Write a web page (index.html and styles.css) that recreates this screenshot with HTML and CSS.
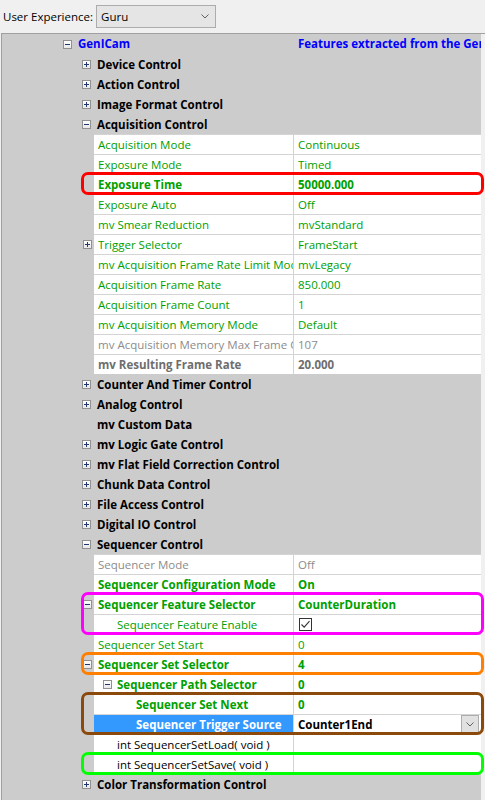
FILE: index.html
```html
<!DOCTYPE html>
<html lang="en">
<head>
    <meta charset="UTF-8">
    <title>Property Grid</title>
    <link rel="stylesheet" href="styles.css">
</head>
<body>
<div class="toolbar">
    <label>User Experience:</label>
    <div class="combo">
        <span>Guru</span>
        <svg class="chev" width="8" height="5" viewBox="0 0 8 5"><path d="M0.5 0.5 L4 4 L7.5 0.5" fill="none" stroke="#606060"/></svg>
    </div>
</div>

<div class="tree">
    <div class="rows">
        <div class="root">
            <div class="root-name"><span class="exp"></span><span>GenICam</span></div>
            <div class="root-val">Features extracted from the GenICam XML file</div>
        </div>

        <div class="node"><span class="exp plus"></span>Device Control</div>
        <div class="node"><span class="exp plus"></span>Action Control</div>
        <div class="node"><span class="exp plus"></span>Image Format Control</div>
        <div class="node"><span class="exp"></span>Acquisition Control</div>

        <div class="row g"><div class="gut"></div><div class="name">Acquisition Mode</div><div class="val">Continuous</div></div>
        <div class="row g"><div class="gut"></div><div class="name">Exposure Mode</div><div class="val">Timed</div></div>
        <div class="mark red">
            <div class="row gb"><div class="gut"></div><div class="name">Exposure Time</div><div class="val">50000.000</div></div>
        </div>
        <div class="row g"><div class="gut"></div><div class="name">Exposure Auto</div><div class="val">Off</div></div>
        <div class="row g"><div class="gut"></div><div class="name">mv Smear Reduction</div><div class="val">mvStandard</div></div>
        <div class="row g"><div class="gut"><span class="exp plus"></span></div><div class="name">Trigger Selector</div><div class="val">FrameStart</div></div>
        <div class="row g"><div class="gut"></div><div class="name">mv Acquisition Frame Rate Limit Mode</div><div class="val">mvLegacy</div></div>
        <div class="row g"><div class="gut"></div><div class="name">Acquisition Frame Rate</div><div class="val">850.000</div></div>
        <div class="row g"><div class="gut"></div><div class="name">Acquisition Frame Count</div><div class="val">1</div></div>
        <div class="row g"><div class="gut"></div><div class="name">mv Acquisition Memory Mode</div><div class="val">Default</div></div>
        <div class="row dis"><div class="gut"></div><div class="name">mv Acquisition Memory Max Frame Count</div><div class="val">107</div></div>
        <div class="row disb"><div class="gut"></div><div class="name">mv Resulting Frame Rate</div><div class="val">20.000</div></div>

        <div class="node"><span class="exp plus"></span>Counter And Timer Control</div>
        <div class="node"><span class="exp plus"></span>Analog Control</div>
        <div class="node"><span class="exp none"></span>mv Custom Data</div>
        <div class="node"><span class="exp plus"></span>mv Logic Gate Control</div>
        <div class="node"><span class="exp plus"></span>mv Flat Field Correction Control</div>
        <div class="node"><span class="exp plus"></span>Chunk Data Control</div>
        <div class="node"><span class="exp plus"></span>File Access Control</div>
        <div class="node"><span class="exp plus"></span>Digital IO Control</div>
        <div class="node"><span class="exp"></span>Sequencer Control</div>

        <div class="row dis"><div class="gut"></div><div class="name">Sequencer Mode</div><div class="val">Off</div></div>
        <div class="row gb"><div class="gut"></div><div class="name">Sequencer Configuration Mode</div><div class="val">On</div></div>
        <div class="mark pink">
            <div class="row gb"><div class="gut"><span class="exp"></span></div><div class="name">Sequencer Feature Selector</div><div class="val">CounterDuration</div></div>
            <div class="row g"><div class="gut"></div><div class="name l2">Sequencer Feature Enable</div>
                <div class="val"><span class="check"><svg width="11" height="11" viewBox="0 0 11 11"><path d="M1.5 5.5 L4.2 8.2 L9.5 2.2" fill="none" stroke="#333" stroke-width="1.1"/></svg></span></div>
            </div>
        </div>
        <div class="row g"><div class="gut"></div><div class="name">Sequencer Set Start</div><div class="val">0</div></div>
        <div class="mark orange">
            <div class="row gb"><div class="gut"><span class="exp"></span></div><div class="name">Sequencer Set Selector</div><div class="val">4</div></div>
        </div>
        <div class="row gb"><div class="gut"></div><div class="name l2x"><span class="exp"></span>Sequencer Path Selector</div><div class="val">0</div></div>
        <div class="mark brown">
            <div class="row gb"><div class="gut"></div><div class="name l3">Sequencer Set Next</div><div class="val">0</div></div>
            <div class="row sel"><div class="gut"></div><div class="name l3">Sequencer Trigger Source</div>
                <div class="val edit"><span>Counter1End</span><span class="drop"><svg width="8" height="5" viewBox="0 0 8 5"><path d="M0.5 0.5 L4 4 L7.5 0.5" fill="none" stroke="#606060"/></svg></span></div>
            </div>
        </div>
        <div class="row meth"><div class="gut"></div><div class="name l2">int SequencerSetLoad( void )</div><div class="val"></div></div>
        <div class="mark lime">
            <div class="row meth"><div class="gut"></div><div class="name l2">int SequencerSetSave( void )</div><div class="val"></div></div>
        </div>

        <div class="node"><span class="exp plus"></span>Color Transformation Control</div>
    </div>
    <div class="vscroll"></div>
</div>
</body>
</html>
```

FILE: styles.css
```css
* {
    margin: 0;
    padding: 0;
    box-sizing: border-box;
}

body {
    width: 485px;
    height: 800px;
    overflow: hidden;
    background: #f0f0f0;
    font-family: "Open Sans", "Noto Sans", sans-serif;
    font-size: 11.5px;
    color: #000;
}

/* top bar with the user level combo */
.toolbar {
    display: flex;
    align-items: center;
    height: 33px;
    padding-left: 3px;
}

.toolbar label {
    margin-right: 3px;
}

.combo {
    display: flex;
    align-items: center;
    justify-content: space-between;
    width: 120px;
    height: 23px;
    padding: 0 6px 0 4px;
    border: 1px solid #acacac;
    background: #e5e5e5;
}

/* property tree */
.tree {
    display: flex;
    height: 767px;
    margin-left: 1px;
    border-left: 1px solid #a0a0a0;
    border-top: 1px solid #a0a0a0;
    background: #cccccc;
}

.rows {
    width: 479px;
}

.vscroll {
    flex: 1;
    background: #f0f0f0;
}

.exp {
    position: relative;
    flex: none;
    width: 9px;
    height: 9px;
    border: 1px solid #919191;
    background: linear-gradient(#ffffff, #e8e8e8);
}

.exp::before {
    content: "";
    position: absolute;
    left: 1px;
    top: 3px;
    width: 5px;
    height: 1px;
    background: #1f3670;
}

.exp.plus::after {
    content: "";
    position: absolute;
    left: 3px;
    top: 1px;
    width: 1px;
    height: 5px;
    background: #1f3670;
}

.exp.none {
    visibility: hidden;
}

.root {
    display: grid;
    grid-template-columns: 292px 1fr;
    height: 20px;
    line-height: 20px;
    font-weight: bold;
    color: #0000ff;
    white-space: nowrap;
}

.root-name {
    display: flex;
    align-items: center;
    gap: 6px;
    padding-left: 61px;
}

.root-val {
    overflow: hidden;
    padding-left: 4px;
}

.node {
    display: flex;
    align-items: center;
    gap: 6px;
    height: 20px;
    padding-left: 80px;
    font-weight: bold;
    white-space: nowrap;
}

.row {
    display: grid;
    grid-template-columns: 92px 200px 1fr;
    height: 20px;
    line-height: 19px;
    white-space: nowrap;
}

.gut {
    display: flex;
    align-items: center;
    justify-content: flex-end;
    padding: 1px 2px 0 0;
}

.name,
.val {
    overflow: hidden;
    background: #fff;
    border-top: 1px solid #d4d4d4;
}

.name {
    display: flex;
    align-items: center;
    gap: 5px;
    padding-left: 4px;
    border-right: 1px solid #d4d4d4;
}

.val {
    padding-left: 4px;
}

.name.l2 {
    padding-left: 23px;
}

.name.l2x {
    padding-left: 9px;
}

.name.l3 {
    padding-left: 42px;
}

.g { color: #00a000; }
.gb { color: #00a000; font-weight: bold; }
.dis { color: #8c8c8c; }
.disb { color: #6e6e6e; font-weight: bold; }
.meth { color: #000; }

.sel .name {
    background: #3399ff;
    color: #fff;
    font-weight: bold;
}

.val.edit {
    display: flex;
    align-items: center;
    justify-content: space-between;
    padding-right: 2px;
    font-weight: bold;
}

.drop {
    display: flex;
    align-items: center;
    justify-content: center;
    width: 18px;
    height: 19px;
    border: 1px solid #adadad;
    background: #e1e1e1;
}

.check {
    display: flex;
    align-items: center;
    justify-content: center;
    width: 13px;
    height: 13px;
    margin: 3px 0 0 1px;
    border: 1px solid #333;
    background: #fff;
}

/* coloured outlines drawn around groups of rows */
.mark {
    position: relative;
}

.mark::after {
    content: "";
    position: absolute;
    left: 79px;
    right: -3px;
    top: -2px;
    bottom: -1px;
    border: 3px solid;
    border-radius: 7px;
    pointer-events: none;
}

.red::after { border-color: #ff0000; }
.pink::after { border-color: #ff00ff; }
.orange::after { border-color: #ff8000; }
.brown::after { border-color: #8b4a0c; }
.lime::after { border-color: #00ff00; }
```
